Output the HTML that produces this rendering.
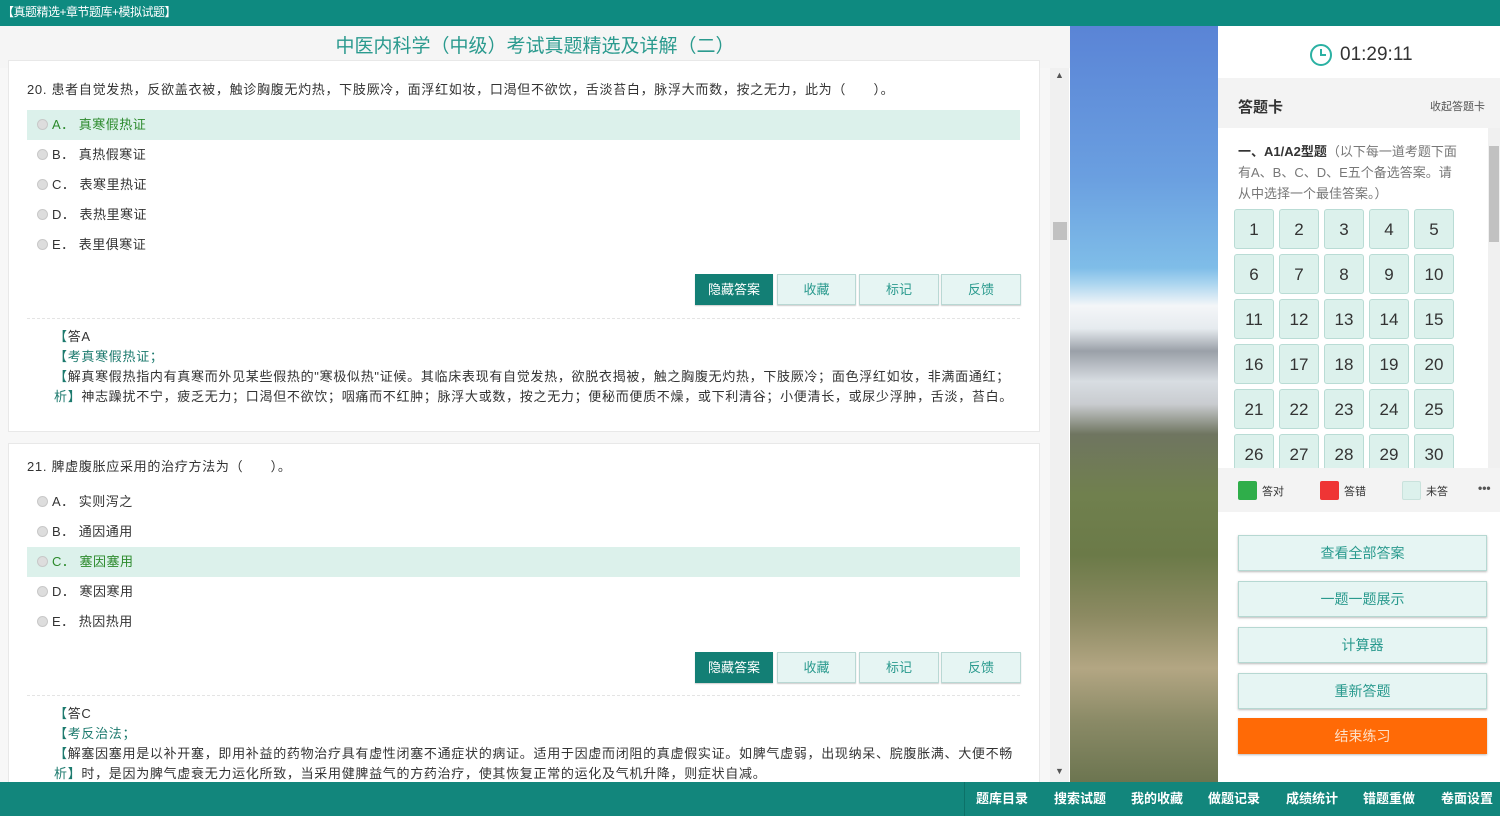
<!DOCTYPE html>
<html><head><meta charset="utf-8"><style>
*{margin:0;padding:0;box-sizing:border-box}
body{width:1500px;height:816px;overflow:hidden;position:relative;font-family:"Liberation Sans","Noto Sans CJK SC",sans-serif;font-size:13px;color:#333;background:#fff}
.a{position:absolute;white-space:nowrap}
.top{left:0;top:0;width:1500px;height:26px;background:#0e8a80;color:#fff;font-size:12px;line-height:24px;padding-left:2px;letter-spacing:-0.5px}
.title{left:0;top:26px;width:1070px;height:42px;background:#f5f5f5;color:#2a9a8e;font-size:19px;line-height:42px;text-align:center;padding-left:0}
.card{border:1px solid #e8e8e8;background:#fff}
.q{letter-spacing:0.7px}
.opt{left:27px;width:993px;height:30px;line-height:30px;padding-left:10px;font-size:13px;letter-spacing:0.5px}
.opt i{display:inline-block;width:11px;height:11px;border-radius:50%;background:#ddd;border:1px solid #c8c8c8;vertical-align:-1px;margin-right:4px}
.opt.h{background:#dcf1eb;color:#2c8a2c}
.btn{height:31px;line-height:29px;text-align:center;border:1px solid #b9d8d4;background:#e6f5f3;color:#2a9a8e;font-size:13px;box-shadow:0 1px 1px #ccc}
.btn.d{background:#137f75;color:#fff;border-color:#137f75}
.dash{left:27px;width:993px;border-top:1px dashed #e4e4e4;height:0}
.ans{left:54px;font-size:13px;line-height:20px;letter-spacing:0.7px}
.ans b{font-weight:normal;color:#1d7a6e}
.g{width:40px;height:40px;line-height:40px;text-align:center;font-size:17px;background:#dcf1ec;border:1px solid #b9dcd5;border-radius:3px;color:#333}
.rb{left:1238px;width:249px;height:36px;line-height:34px;text-align:center;background:#e6f5f3;border:1px solid #b6d8d2;color:#2a9a8e;font-size:14px;box-shadow:0 1px 2px #bbb}
.bot{left:0;top:782px;width:1500px;height:34px;background:#12867c}
.nav{top:782px;height:34px;line-height:34px;color:#fff;font-weight:bold;font-size:13px}
</style></head><body>
<div class="a top">【真题精选+章节题库+模拟试题】</div>
<div class="a title">中医内科学（中级）考试真题精选及详解（二）</div>
<div class="a" style="left:0;top:68px;width:1050px;height:714px;background:#f7f7f7"></div>
<div class="a card" style="left:8px;top:60px;width:1032px;height:372px"></div>
<div class="a card" style="left:8px;top:443px;width:1032px;height:360px"></div>
<div class="a" style="left:1050px;top:68px;width:19px;height:714px;background:#f0f0f0"></div>
<div class="a" style="left:1053px;top:222px;width:14px;height:18px;background:#c1c1c1"></div>
<div class="a" style="left:1055px;top:70px;font-size:9px;color:#555">▲</div>
<div class="a" style="left:1055px;top:766px;font-size:9px;color:#555">▼</div>

<div class="a q" style="left:27px;top:80px;line-height:20px">20. 患者自觉发热，反欲盖衣被，触诊胸腹无灼热，下肢厥冷，面浮红如妆，口渴但不欲饮，舌淡苔白，脉浮大而数，按之无力，此为（　　）。</div>
<div class="a opt h" style="top:110px"><i></i>A．&nbsp;真寒假热证</div>
<div class="a opt" style="top:140px"><i></i>B．&nbsp;真热假寒证</div>
<div class="a opt" style="top:170px"><i></i>C．&nbsp;表寒里热证</div>
<div class="a opt" style="top:200px"><i></i>D．&nbsp;表热里寒证</div>
<div class="a opt" style="top:230px"><i></i>E．&nbsp;表里俱寒证</div>
<div class="a btn d" style="left:695px;top:274px;width:78px">隐藏答案</div>
<div class="a btn" style="left:777px;top:274px;width:79px">收藏</div>
<div class="a btn" style="left:859px;top:274px;width:80px">标记</div>
<div class="a btn" style="left:941px;top:274px;width:80px">反馈</div>
<div class="a dash" style="top:318px"></div>
<div class="a ans" style="top:327px"><b>【</b>答A</div>
<div class="a ans" style="top:347px;color:#1d7a6e">【考真寒假热证；</div>
<div class="a ans" style="top:367px"><b>【</b>解真寒假热指内有真寒而外见某些假热的"寒极似热"证候。其临床表现有自觉发热，欲脱衣揭被，触之胸腹无灼热，下肢厥冷；面色浮红如妆，非满面通红；</div>
<div class="a ans" style="top:387px"><b>析】</b>神志躁扰不宁，疲乏无力；口渴但不欲饮；咽痛而不红肿；脉浮大或数，按之无力；便秘而便质不燥，或下利清谷；小便清长，或尿少浮肿，舌淡，苔白。</div>

<div class="a q" style="left:27px;top:457px;line-height:20px">21. 脾虚腹胀应采用的治疗方法为（　　）。</div>
<div class="a opt" style="top:487px"><i></i>A．&nbsp;实则泻之</div>
<div class="a opt" style="top:517px"><i></i>B．&nbsp;通因通用</div>
<div class="a opt h" style="top:547px"><i></i>C．&nbsp;塞因塞用</div>
<div class="a opt" style="top:577px"><i></i>D．&nbsp;寒因寒用</div>
<div class="a opt" style="top:607px"><i></i>E．&nbsp;热因热用</div>
<div class="a btn d" style="left:695px;top:652px;width:78px">隐藏答案</div>
<div class="a btn" style="left:777px;top:652px;width:79px">收藏</div>
<div class="a btn" style="left:859px;top:652px;width:80px">标记</div>
<div class="a btn" style="left:941px;top:652px;width:80px">反馈</div>
<div class="a dash" style="top:695px"></div>
<div class="a ans" style="top:704px"><b>【</b>答C</div>
<div class="a ans" style="top:724px;color:#1d7a6e">【考反治法；</div>
<div class="a ans" style="top:744px"><b>【</b>解塞因塞用是以补开塞，即用补益的药物治疗具有虚性闭塞不通症状的病证。适用于因虚而闭阻的真虚假实证。如脾气虚弱，出现纳呆、脘腹胀满、大便不畅</div>
<div class="a ans" style="top:764px"><b>析】</b>时，是因为脾气虚衰无力运化所致，当采用健脾益气的方药治疗，使其恢复正常的运化及气机升降，则症状自减。</div>

<div class="a" style="left:1070px;top:26px;width:148px;height:756px;background:linear-gradient(180deg,#5a84d6 0%,#6a9fe0 20%,#7fbde8 32%,#a9d4ef 34%,#f4f6f8 37%,#e6ebef 40%,#9aa0a8 43%,#d8dde2 47%,#c9ccd0 50%,#6f7560 54%,#70804e 62%,#6b7a48 70%,#8c8a62 78%,#b3a683 85%,#8a8a66 92%,#6c7550 100%)"></div>

<div class="a" style="left:1218px;top:26px;width:282px;height:52px;background:#fff"></div>
<svg class="a" style="left:1309px;top:43px" width="24" height="24" viewBox="0 0 24 24"><circle cx="12" cy="12" r="10" fill="none" stroke="#2bb1a3" stroke-width="2"/><path d="M12 6v6h5" fill="none" stroke="#2bb1a3" stroke-width="2"/></svg>
<div class="a" style="left:1340px;top:43px;font-size:19px;line-height:24px;color:#333">01:29:11</div>
<div class="a" style="left:1218px;top:78px;width:282px;height:50px;background:#f3f3f3"></div>
<div class="a" style="left:1238px;top:96px;font-size:15px;font-weight:bold;color:#333">答题卡</div>
<div class="a" style="left:1430px;top:98px;font-size:11px;color:#555">收起答题卡</div>
<div class="a" style="left:1488px;top:128px;width:12px;height:340px;background:#f0f0f0"></div>
<div class="a" style="left:1489px;top:146px;width:10px;height:96px;background:#c1c1c1"></div>
<div class="a" style="left:1238px;top:141px;width:222px;font-size:13px;line-height:21px;color:#777;white-space:normal"><b style="color:#333">一、A1/A2型题</b>（以下每一道考题下面有A、B、C、D、E五个备选答案。请从中选择一个最佳答案。）</div>
<div class="a g" style="left:1234px;top:209px">1</div><div class="a g" style="left:1279px;top:209px">2</div><div class="a g" style="left:1324px;top:209px">3</div><div class="a g" style="left:1369px;top:209px">4</div><div class="a g" style="left:1414px;top:209px">5</div>
<div class="a g" style="left:1234px;top:254px">6</div><div class="a g" style="left:1279px;top:254px">7</div><div class="a g" style="left:1324px;top:254px">8</div><div class="a g" style="left:1369px;top:254px">9</div><div class="a g" style="left:1414px;top:254px">10</div>
<div class="a g" style="left:1234px;top:299px">11</div><div class="a g" style="left:1279px;top:299px">12</div><div class="a g" style="left:1324px;top:299px">13</div><div class="a g" style="left:1369px;top:299px">14</div><div class="a g" style="left:1414px;top:299px">15</div>
<div class="a g" style="left:1234px;top:344px">16</div><div class="a g" style="left:1279px;top:344px">17</div><div class="a g" style="left:1324px;top:344px">18</div><div class="a g" style="left:1369px;top:344px">19</div><div class="a g" style="left:1414px;top:344px">20</div>
<div class="a g" style="left:1234px;top:389px">21</div><div class="a g" style="left:1279px;top:389px">22</div><div class="a g" style="left:1324px;top:389px">23</div><div class="a g" style="left:1369px;top:389px">24</div><div class="a g" style="left:1414px;top:389px">25</div>
<div class="a" style="left:1218px;top:434px;width:270px;height:34px;overflow:hidden"><div class="a g" style="left:16px;top:0">26</div><div class="a g" style="left:61px;top:0">27</div><div class="a g" style="left:106px;top:0">28</div><div class="a g" style="left:151px;top:0">29</div><div class="a g" style="left:196px;top:0">30</div></div>
<div class="a" style="left:1218px;top:468px;width:282px;height:44px;background:#f3f3f3"></div>
<div class="a" style="left:1238px;top:481px;width:19px;height:19px;background:#2fae4a;border-radius:2px"></div>
<div class="a" style="left:1262px;top:483px;font-size:11px">答对</div>
<div class="a" style="left:1320px;top:481px;width:19px;height:19px;background:#ef3535;border-radius:2px"></div>
<div class="a" style="left:1344px;top:483px;font-size:11px">答错</div>
<div class="a" style="left:1402px;top:481px;width:19px;height:19px;background:#dcf1ec;border:1px solid #c9e2dc;border-radius:2px"></div>
<div class="a" style="left:1426px;top:483px;font-size:11px">未答</div>
<div class="a" style="left:1478px;top:481px;font-size:12px;color:#555;font-weight:bold">•••</div>
<div class="a rb" style="top:535px">查看全部答案</div>
<div class="a rb" style="top:581px">一题一题展示</div>
<div class="a rb" style="top:627px">计算器</div>
<div class="a rb" style="top:673px">重新答题</div>
<div class="a rb" style="top:718px;background:#ff6a06;border-color:#ff6a06;color:#fde0c8">结束练习</div>

<div class="a bot"></div>
<div class="a" style="left:964px;top:782px;width:1px;height:34px;background:#0c7168"></div>
<div class="a nav" style="left:976px">题库目录</div>
<div class="a nav" style="left:1054px">搜索试题</div>
<div class="a nav" style="left:1131px">我的收藏</div>
<div class="a nav" style="left:1208px">做题记录</div>
<div class="a nav" style="left:1286px">成绩统计</div>
<div class="a nav" style="left:1363px">错题重做</div>
<div class="a nav" style="left:1441px">卷面设置</div>
</body></html>
